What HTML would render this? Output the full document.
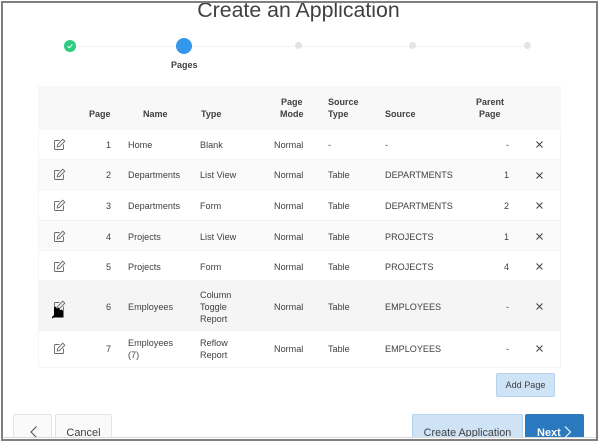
<!DOCTYPE html>
<html><head><meta charset="utf-8"><style>
html,body{margin:0;padding:0;background:#fff}
#p{position:relative;width:600px;height:441px;overflow:hidden;background:#fff;font-family:"Liberation Sans",sans-serif;color:#404040;font-size:9.1px}
#c{position:absolute;left:0;top:0;width:600px;height:441px;filter:blur(.3px)}
.a{position:absolute;white-space:nowrap;line-height:12px;margin-top:.5px}
.h{font-weight:bold;color:#404040;font-size:9px;margin-top:0}
.r{position:absolute;left:38px;width:523px;border-bottom:1px solid #f3f3f3;box-sizing:border-box}
.d{position:absolute;width:7px;height:7px;border-radius:50%;background:#e4e4e4;top:42px}
svg{position:absolute;overflow:visible}
.b{position:absolute;box-sizing:border-box;text-align:center;border-radius:2px}
</style></head><body><div id="p"><div id="c">
<div class="a" style="left:0;width:597px;text-align:center;top:-3px;font-size:21.3px;line-height:26px;color:#404040;margin:0">Create an Application</div>
<div style="position:absolute;left:70px;top:45.5px;width:457px;height:1px;background:#f3f3f3"></div>
<div style="position:absolute;left:64px;top:40px;width:12px;height:12px;border-radius:50%;background:#2ecc7f"></div>
<svg style="left:64px;top:40px" width="12" height="12"><path d="M3.6 6.2L5.3 7.8L8.4 4.4" fill="none" stroke="#fff" stroke-width="1"/></svg>
<div style="position:absolute;left:176px;top:38px;width:16px;height:16px;border-radius:50%;background:#3597ea"></div>
<div class="d" style="left:295px"></div><div class="d" style="left:409px"></div><div class="d" style="left:524px"></div>
<div class="a h" style="left:171px;top:59px">Pages</div>

<div style="position:absolute;left:38px;top:86px;width:523px;height:44px;background:#f8f8f8"></div>
<div class="r" style="top:130px;height:30px"></div>
<div class="r" style="top:160px;height:30px;background:#fafafa"></div>
<div class="r" style="top:190px;height:31px"></div>
<div class="r" style="top:221px;height:30px;background:#fafafa"></div>
<div class="r" style="top:251px;height:30px"></div>
<div class="r" style="top:281px;height:50px;background:#f5f5f5"></div>
<div class="r" style="top:331px;height:37px"></div>
<div style="position:absolute;left:38px;top:130px;width:1px;height:238px;background:#f5f5f5"></div>
<div style="position:absolute;left:560px;top:130px;width:1px;height:238px;background:#f5f5f5"></div>

<div class="a h" style="left:89px;top:108px">Page</div>
<div class="a h" style="left:143px;top:108px">Name</div>
<div class="a h" style="left:201px;top:108px">Type</div>
<div class="a h" style="left:281px;top:96px">Page</div>
<div class="a h" style="left:280px;top:108px">Mode</div>
<div class="a h" style="left:328px;top:96px">Source</div>
<div class="a h" style="left:328px;top:108px">Type</div>
<div class="a h" style="left:385px;top:108px">Source</div>
<div class="a h" style="left:476px;top:96px">Parent</div>
<div class="a h" style="left:479px;top:108px">Page</div>

<svg width="0" height="0" style="position:absolute"><defs>
<g id="e" fill="none" stroke="#666" stroke-width=".9"><path d="M6.5 2.5H2.5Q1.5 2.5 1.5 3.5V10.5Q1.5 11.5 2.5 11.5H9.5Q10.5 11.5 10.5 10.5V6.5"/><path d="M4.5 6.8L9.8 1.2L11.8 3.2L6.4 8.6L4.2 9Z"/></g>
<g id="x" fill="none" stroke="#404040" stroke-width="1"><path d="M.5 .5L6.5 6.5M6.5 .5L.5 6.5"/></g>
</defs></svg>

<svg style="left:53px;top:138px" width="13" height="13"><use href="#e"/></svg>
<svg style="left:53px;top:168px" width="13" height="13"><use href="#e"/></svg>
<svg style="left:53px;top:199px" width="13" height="13"><use href="#e"/></svg>
<svg style="left:53px;top:230px" width="13" height="13"><use href="#e"/></svg>
<svg style="left:53px;top:260px" width="13" height="13"><use href="#e"/></svg>
<svg style="left:53px;top:300px" width="13" height="13"><use href="#e"/></svg>
<svg style="left:53px;top:342px" width="13" height="13"><use href="#e"/></svg>
<svg style="left:51px;top:305px" width="14" height="14"><path d="M3 2.5L5 1.5L6 4L8 2.5L9 5L11 4.5L12.5 7V12.5H3L1 13.5V12L3 10Z" fill="#000"/></svg>

<svg style="left:536px;top:141px" width="7" height="7"><use href="#x"/></svg>
<svg style="left:536px;top:172px" width="7" height="7"><use href="#x"/></svg>
<svg style="left:536px;top:202px" width="7" height="7"><use href="#x"/></svg>
<svg style="left:536px;top:233px" width="7" height="7"><use href="#x"/></svg>
<svg style="left:536px;top:263px" width="7" height="7"><use href="#x"/></svg>
<svg style="left:536px;top:303px" width="7" height="7"><use href="#x"/></svg>
<svg style="left:536px;top:345px" width="7" height="7"><use href="#x"/></svg>

<div class="a" style="left:106px;top:138px">1</div><div class="a" style="left:128px;top:138px">Home</div><div class="a" style="left:200px;top:138px">Blank</div><div class="a" style="left:274px;top:138px">Normal</div><div class="a" style="left:328px;top:138px">-</div><div class="a" style="left:385px;top:138px">-</div><div class="a" style="left:506px;top:138px">-</div>
<div class="a" style="left:106px;top:168px">2</div><div class="a" style="left:128px;top:168px">Departments</div><div class="a" style="left:200px;top:168px">List View</div><div class="a" style="left:274px;top:168px">Normal</div><div class="a" style="left:328px;top:168px">Table</div><div class="a" style="left:385px;top:168px">DEPARTMENTS</div><div class="a" style="left:504px;top:168px">1</div>
<div class="a" style="left:106px;top:199px">3</div><div class="a" style="left:128px;top:199px">Departments</div><div class="a" style="left:200px;top:199px">Form</div><div class="a" style="left:274px;top:199px">Normal</div><div class="a" style="left:328px;top:199px">Table</div><div class="a" style="left:385px;top:199px">DEPARTMENTS</div><div class="a" style="left:504px;top:199px">2</div>
<div class="a" style="left:106px;top:230px">4</div><div class="a" style="left:128px;top:230px">Projects</div><div class="a" style="left:200px;top:230px">List View</div><div class="a" style="left:274px;top:230px">Normal</div><div class="a" style="left:328px;top:230px">Table</div><div class="a" style="left:385px;top:230px">PROJECTS</div><div class="a" style="left:504px;top:230px">1</div>
<div class="a" style="left:106px;top:260px">5</div><div class="a" style="left:128px;top:260px">Projects</div><div class="a" style="left:200px;top:260px">Form</div><div class="a" style="left:274px;top:260px">Normal</div><div class="a" style="left:328px;top:260px">Table</div><div class="a" style="left:385px;top:260px">PROJECTS</div><div class="a" style="left:504px;top:260px">4</div>
<div class="a" style="left:106px;top:300px">6</div><div class="a" style="left:128px;top:300px">Employees</div><div class="a" style="left:200px;top:288px">Column</div><div class="a" style="left:200px;top:300px">Toggle</div><div class="a" style="left:200px;top:312px">Report</div><div class="a" style="left:274px;top:300px">Normal</div><div class="a" style="left:328px;top:300px">Table</div><div class="a" style="left:385px;top:300px">EMPLOYEES</div><div class="a" style="left:506px;top:300px">-</div>
<div class="a" style="left:106px;top:342px">7</div><div class="a" style="left:128px;top:336px">Employees</div><div class="a" style="left:128px;top:348px">(7)</div><div class="a" style="left:200px;top:336px">Reflow</div><div class="a" style="left:200px;top:348px">Report</div><div class="a" style="left:274px;top:342px">Normal</div><div class="a" style="left:328px;top:342px">Table</div><div class="a" style="left:385px;top:342px">EMPLOYEES</div><div class="a" style="left:506px;top:342px">-</div>

<div class="b" style="left:496px;top:373px;width:59px;height:24px;background:#cfe3f7;border:1px solid #b5d3ee;line-height:22px;font-size:9.1px">Add Page</div>
<div class="b" style="left:13px;top:414px;width:39px;height:40px;background:#fafafa;border:1px solid #e4e4e4"></div>
<svg style="left:29px;top:425px" width="10" height="14"><path d="M7.5 1.5L2 7L7.5 12.5" fill="none" stroke="#555" stroke-width="1.1"/></svg>
<div class="b" style="left:55px;top:414px;width:57px;height:40px;background:#fafafa;border:1px solid #e4e4e4;font-size:11px;line-height:37px">Cancel</div>
<div class="b" style="left:412px;top:414px;width:111px;height:40px;background:#cfe3f7;border:1px solid #b5d3ee;font-size:10.8px;line-height:37px">Create Application</div>
<div class="b" style="left:525px;top:414px;width:59px;height:40px;background:#2a78bd;color:#fff;font-size:11px;font-weight:bold;line-height:38px;text-align:left;padding-left:12px">Next</div>
<svg style="left:563px;top:425px" width="10" height="14"><path d="M2 1.5L7.5 7L2 12.5" fill="none" stroke="#fff" stroke-width="1.1"/></svg>
</div>
<div style="position:absolute;left:0;top:437px;width:600px;height:4px;background:#fff"></div>
<div style="position:absolute;left:3px;top:437px;width:593px;height:1px;background:#dcdcdc"></div>
<div style="position:absolute;left:1px;top:1px;width:597px;height:2px;background:#7f7f7f"></div>
<div style="position:absolute;left:1px;top:1px;width:2px;height:439px;background:#7f7f7f"></div>
<div style="position:absolute;left:596px;top:1px;width:2px;height:439px;background:#7f7f7f"></div>
<div style="position:absolute;left:1px;top:438.5px;width:597px;height:2px;background:#7f7f7f"></div>
</div></body></html>
